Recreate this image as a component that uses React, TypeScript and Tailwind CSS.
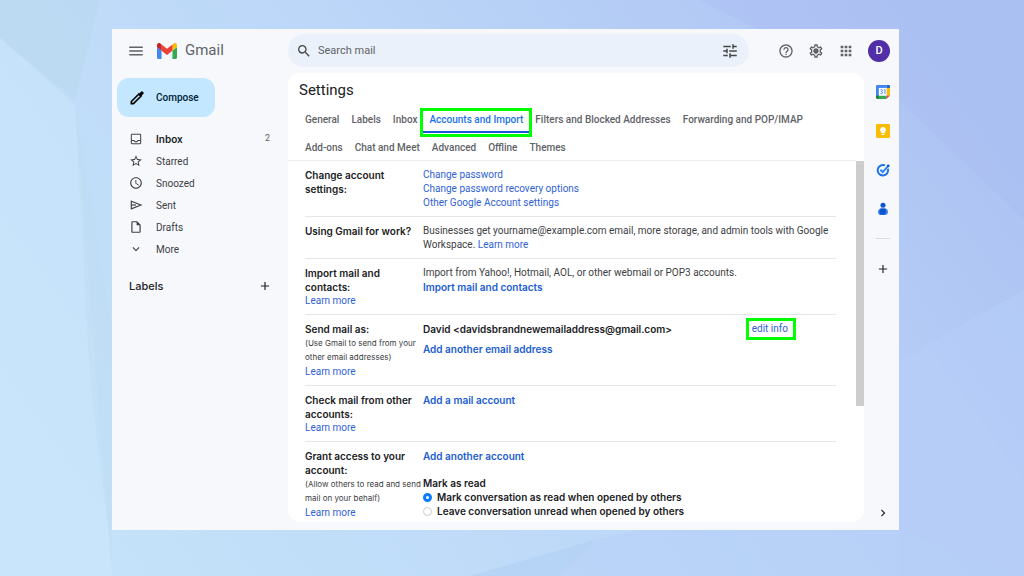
import * as React from 'react'
import {
  MdAccessTime,
  MdAdd,
  MdApps,
  MdChevronRight,
  MdExpandMore,
  MdHelpOutline,
  MdMenu,
  MdOutlineInsertDriveFile,
  MdOutlineSettings,
  MdSearch,
  MdStarBorder,
  MdTune,
} from 'react-icons/md'

function Backdrop() {
  return (
    <svg
      className="absolute inset-0 h-full w-full"
      viewBox="0 0 1024 576"
      preserveAspectRatio="none"
      aria-hidden="true"
    >
      <defs>
        <linearGradient id="sky" x1="0" y1="0.7" x2="1" y2="0.3">
          <stop offset="0" stopColor="#c4e2f9" />
          <stop offset="0.5" stopColor="#bcd7f8" />
          <stop offset="1" stopColor="#adc3f3" />
        </linearGradient>
      </defs>
      <rect width="1024" height="576" fill="url(#sky)" />
      <path d="M0 0h100L75 100 0 38Z" fill="#bad7ea" opacity="0.4" />
      <path d="M0 38 75 105 112 576H0Z" fill="#cbe8fd" opacity="0.5" />
      <path d="M75 105 112 330V560L90 380Z" fill="#bedbf1" opacity="0.5" />
      <path d="M700 0h324v220L899 100Z" fill="#a9bbf1" opacity="0.3" />
      <path d="M899 360 1024 290V576H899Z" fill="#b5cdf8" opacity="0.6" />
      <path d="M899 362 930 347 1024 480V576H940Z" fill="#b5cdf7" opacity="0.5" />
      <path d="M470 576 594 540 560 576Z" fill="#aecdf3" opacity="0.5" />
      <path d="M594 540 640 530H899L1024 576H560Z" fill="#b5cff8" opacity="0.5" />
    </svg>
  )
}

function GmailLogo() {
  return (
    <svg className="h-4 w-5" viewBox="52 42 88 66" preserveAspectRatio="none" aria-hidden="true">
      <path fill="#4285f4" d="M58 108h14V74L52 59v43c0 3.32 2.69 6 6 6" />
      <path fill="#34a853" d="M120 108h14c3.32 0 6-2.69 6-6V59l-20 15" />
      <path fill="#fbbc04" d="M120 48v26l20-15v-8c0-7.42-8.47-11.65-14.4-7.2" />
      <path fill="#ea4335" d="M72 74V48l24 18 24-18v26L96 92" />
      <path fill="#c5221f" d="M52 51v8l20 15V48l-5.6-4.2c-5.94-4.45-14.4-.22-14.4 7.2" />
    </svg>
  )
}

function PencilIcon() {
  return (
    <svg className="size-4" viewBox="0 0 24 24" fill="none" stroke="#000" strokeWidth="2.4" aria-hidden="true">
      <path d="M3.500 17.300 15 5.800l3.200 3.200L6.700 20.500H3.500Z" />
      <path d="m14 6.800 4.400-4.600c.6-.5 1.200-.5 1.700 0l1.700 1.700c.5.6.5 1.200 0 1.700L17.200 10Z" fill="#000" stroke="none" />
    </svg>
  )
}

function GearIcon() {
  return (
    <svg className="size-4" viewBox="0 0 24 24" fill="currentColor" aria-hidden="true">
      <MdOutlineSettings size={24} />
      <circle cx="12" cy="12" r="3.500" />
    </svg>
  )
}

function InboxIcon() {
  return (
    <svg className="size-3.5" viewBox="0 0 24 24" fill="none" stroke="#444746" strokeWidth="1.800" aria-hidden="true">
      <rect x="4" y="4" width="16" height="16" rx="1" />
      <path d="M4 14.500h4.500c.8 1.600 2 2.400 3.500 2.400s2.700-.8 3.500-2.400H20" />
    </svg>
  )
}

function SendIcon() {
  return (
    <svg className="size-3.5" viewBox="0 0 24 24" fill="none" stroke="currentColor" strokeWidth="2" aria-hidden="true">
      <path d="M4 5.500 20.500 12 4 18.500Z" />
      <path d="M4 12h8" />
    </svg>
  )
}

function CalendarIcon() {
  return (
    <svg className="size-3.5" viewBox="0 0 24 24" aria-hidden="true">
      <path fill="#4285f4" d="M2 0h16v5H5v14H0V2C0 1 1 0 2 0Z" />
      <path fill="#1967d2" d="M18 0h4c1 0 2 1 2 2v3h-6Z" />
      <path fill="#fbbc04" d="M18 5h6v13h-6Z" />
      <path fill="#34a853" d="M5 18h13v6H5Z" />
      <path fill="#188038" d="M0 18h5v6H2c-1 0-2-1-2-2Z" />
      <path fill="#ea4335" d="M18 18h6l-6 6Z" />
      <path fill="#fff" d="M5 5h13v13H5Z" />
      <path
        fill="none"
        stroke="#4285f4"
        strokeWidth="1.600"
        d="M7.500 8.500c1-1.300 3.500-1 3.500.8 0 1.200-1 1.900-2 1.900 1.200 0 2.300.8 2.300 2.100 0 2-3 2.500-4 .7M13.500 9l2-1v7.500"
      />
    </svg>
  )
}

function KeepIcon() {
  return (
    <svg className="size-3.5" viewBox="0 0 24 24" aria-hidden="true">
      <rect width="24" height="24" rx="2" fill="#fbbc04" />
      <path fill="#fff" d="M12 5a5 5 0 0 0-3 9v2h6v-2a5 5 0 0 0-3-9ZM9.500 17h5v2h-5Z" />
    </svg>
  )
}

function TasksIcon() {
  return (
    <svg className="size-3.5" viewBox="0 0 24 24" fill="none" aria-hidden="true">
      <path d="M15.500 4.200A9 9 0 1 0 20.500 10" stroke="#1a73e8" strokeWidth="3.400" />
      <path d="m7.500 11.500 4 4L21 5" stroke="#2684fc" strokeWidth="3.400" />
      <circle cx="21" cy="4.800" r="2.300" fill="#0b57d0" />
    </svg>
  )
}

function ContactsIcon() {
  return (
    <svg className="size-3.5" viewBox="0 0 24 24" aria-hidden="true">
      <circle cx="12" cy="5.500" r="4.300" fill="#0b57d0" />
      <path fill="#4285f4" d="M9 11h6c3.500 0 5.500 2.500 5.500 5.500 0 3-1.500 5.500-4 5.500h-9c-2.500 0-4-2.500-4-5.500C3.500 13.500 5.500 11 9 11Z" />
      <path fill="#0b57d0" d="M8 11h8c1.500 1.500 1.500 8-1 11H7.500C5 19 6 13 8 11Z" />
    </svg>
  )
}

function Highlight({ className }: { className: string }) {
  return <span className={`pointer-events-none absolute border-3 border-[#00ff00] ${className}`} />
}

const NAV = [
  { label: 'Inbox', icon: <InboxIcon />, count: 2 },
  { label: 'Starred', icon: <MdStarBorder className="size-3.5" /> },
  { label: 'Snoozed', icon: <MdAccessTime className="size-3.5" /> },
  { label: 'Sent', icon: <SendIcon /> },
  { label: 'Drafts', icon: <MdOutlineInsertDriveFile className="size-3.5" /> },
  { label: 'More', icon: <MdExpandMore className="size-3.5" /> },
]

function Sidebar() {
  return (
    <aside className="w-44 shrink-0 pt-[5px] pl-[5px]">
      <button className="flex h-[39px] w-[98px] items-center gap-[11px] rounded-xl bg-[#c2e7ff] pl-3 text-[10px] font-medium text-[#001d35]">
        <PencilIcon />
        Compose
      </button>
      <nav className="mt-[11px] pr-[18px] pl-3 text-[10px] text-[#3c4043]">
        {NAV.map((item) => (
          <a key={item.label} href="#" className="flex h-[22px] items-center gap-[13px]">
            {item.icon}
            <span
              className={
                item.count ? "flex-1 font-['Inter',sans-serif] font-semibold text-[#202124]" : 'flex-1'
              }
            >
              {item.label}
            </span>
            {item.count && <span className="text-[9px] text-[#5f6368]">{item.count}</span>}
          </a>
        ))}
      </nav>
      <div className="mt-4 flex items-center justify-between pr-4 pl-3 text-[#202124]">
        <h2 className="font-['Inter',sans-serif] text-[11px] leading-5 font-medium">Labels</h2>
        <button aria-label="Create new label">
          <MdAdd className="size-3.5" />
        </button>
      </div>
    </aside>
  )
}

function Header() {
  return (
    <header className="flex h-11 items-center pb-px text-[#5f6368]">
      <div className="flex w-44 shrink-0 items-center pl-[15px]">
        <button aria-label="Main menu">
          <MdMenu className="size-[18px]" />
        </button>
        <div className="flex items-center gap-2 pl-3">
          <GmailLogo />
          <span className="text-[15px]">Gmail</span>
        </div>
      </div>
      <form className="flex h-[33px] flex-1 items-center gap-1.5 rounded-full bg-[#eaf1fb] pr-2.5 pl-2 text-[#444746]">
        <button type="button" aria-label="Search">
          <MdSearch className="size-4" />
        </button>
        <input
          type="search"
          aria-label="Search mail"
          placeholder="Search mail"
          className="min-w-0 flex-1 bg-transparent pt-0.5 text-[11px] outline-none placeholder:text-[#5f6368]"
        />
        <button type="button" aria-label="Search options">
          <MdTune className="size-[18px]" />
        </button>
      </form>
      <div className="flex w-[150px] shrink-0 items-center justify-end gap-3.5 pr-[9px]">
        <button aria-label="Support">
          <MdHelpOutline className="size-4" />
        </button>
        <button aria-label="Settings">
          <GearIcon />
        </button>
        <button aria-label="Google apps">
          <MdApps className="size-4" />
        </button>
        <button className="size-[22px] rounded-full bg-[#512da8] pt-0.5 text-[11px] font-medium text-white">D</button>
      </div>
    </header>
  )
}

const TAB_ROWS = [
  ['General', 'Labels', 'Inbox', 'Accounts and Import', 'Filters and Blocked Addresses', 'Forwarding and POP/IMAP'],
  ['Add-ons', 'Chat and Meet', 'Advanced', 'Offline', 'Themes'],
]

function Tabs() {
  return (
    <nav className="mr-2 border-b border-[#eceff1] pl-[17px] text-[10px] font-medium text-[#5f6368]">
      {TAB_ROWS.map((row, i) => (
        <div key={i} className="flex h-7 items-center gap-3 pt-0.5 whitespace-nowrap">
          {row.map((tab) =>
            tab === 'Accounts and Import' ? (
              <a key={tab} href="#" className="relative text-[#1a73e8]">
                {tab}
                <span className="absolute -inset-x-1.5 -bottom-1.5 h-0.5 bg-[#1a56db]" />
                <Highlight className="-inset-x-[9px] -top-1 -bottom-2.5" />
              </a>
            ) : (
              <a key={tab} href="#">
                {tab}
              </a>
            )
          )}
        </div>
      ))}
    </nav>
  )
}

const STRONG = "font-['Inter',sans-serif] font-semibold"

function Link({ children, bold }: { children: React.ReactNode; bold?: boolean }) {
  return (
    <a href="#" className={bold ? `${STRONG} text-[#1a5dd0]` : 'text-[#2f62d5]'}>
      {children}
    </a>
  )
}

function Row({
  title,
  note,
  learnMore,
  children,
}: {
  title: string
  note?: string
  learnMore?: boolean
  children: React.ReactNode
}) {
  return (
    <section className="flex border-b border-[#e4e6e8] pt-[7px] pb-1.5 last:border-b-0 last:pb-0.5">
      <div className="w-[118px] shrink-0">
        <h3 className={`${STRONG} pr-2 text-[#202124]`}>{title}</h3>
        {note && <p className="pb-px font-['Inter',sans-serif] text-[8px] leading-[14px]">{note}</p>}
        {learnMore && <Link>Learn more</Link>}
      </div>
      <div className="min-w-0 flex-1">{children}</div>
    </section>
  )
}

function Settings() {
  const [markRead, setMarkRead] = React.useState(true)
  const radio =
    'size-[9px] appearance-none rounded-full border border-[#c8cacc] bg-white checked:border-3 checked:border-[#0b7bff]'

  return (
    <main className="flex min-w-0 flex-1 flex-col overflow-hidden rounded-xl bg-white">
      <h1 className="pt-[7px] pb-1 pl-[11px] text-[15px] leading-5 text-[#202124]">Settings</h1>
      <Tabs />
      <div className="flex flex-1">
        <div className="min-w-0 flex-1 pr-5 pl-[17px] text-[10px] leading-[14px] text-[#3c4043]">
          <Row title="Change account settings:">
            <div className="flex flex-col items-start">
              <Link>Change password</Link>
              <Link>Change password recovery options</Link>
              <Link>Other Google Account settings</Link>
            </div>
          </Row>
          <Row title="Using Gmail for work?">
            Businesses get yourname@example.com email, more storage, and admin tools with Google Workspace.{' '}
            <Link>Learn more</Link>
          </Row>
          <Row title="Import mail and contacts:" learnMore>
            <p>Import from Yahoo!, Hotmail, AOL, or other webmail or POP3 accounts.</p>
            <Link bold>Import mail and contacts</Link>
          </Row>
          <Row title="Send mail as:" note="(Use Gmail to send from your other email addresses)" learnMore>
            <div className="flex justify-between pr-12">
              <span className={`${STRONG} text-[#202124]`}>David &lt;davidsbrandnewemailaddress@gmail.com&gt;</span>
              <a href="#" className="relative text-[#2f62d5]">
                edit info
                <Highlight className="-inset-y-1 -right-2 -left-1.5" />
              </a>
            </div>
            <div className="mt-1.5">
              <Link bold>Add another email address</Link>
            </div>
          </Row>
          <Row title="Check mail from other accounts:" learnMore>
            <Link bold>Add a mail account</Link>
          </Row>
          <Row title="Grant access to your account:" note="(Allow others to read and send mail on your behalf)" learnMore>
            <Link bold>Add another account</Link>
            <fieldset className={`${STRONG} mt-3 text-[#202124]`}>
              <legend>Mark as read</legend>
              <label className="flex items-center gap-[5px]">
                <input
                  type="radio"
                  name="mark"
                  className={radio}
                  checked={markRead}
                  onChange={() => setMarkRead(true)}
                />
                Mark conversation as read when opened by others
              </label>
              <label className="flex items-center gap-[5px]">
                <input
                  type="radio"
                  name="mark"
                  className={radio}
                  checked={!markRead}
                  onChange={() => setMarkRead(false)}
                />
                Leave conversation unread when opened by others
              </label>
            </fieldset>
          </Row>
        </div>
        <div className="w-2 shrink-0">
          <div className="h-[68%] bg-[#cdcdcd]" />
        </div>
      </div>
    </main>
  )
}

function SidePanel() {
  return (
    <aside className="flex w-[35px] shrink-0 flex-col items-center pt-3 pb-0.5 pl-[3px] text-[#202124]">
      <div className="flex flex-col items-center gap-[25px]">
        <button aria-label="Calendar">
          <CalendarIcon />
        </button>
        <button aria-label="Keep">
          <KeepIcon />
        </button>
        <button aria-label="Tasks">
          <TasksIcon />
        </button>
        <button aria-label="Contacts">
          <ContactsIcon />
        </button>
      </div>
      <hr className="mt-[22px] mb-[23px] w-3.5 border-[#dadce0]" />
      <button aria-label="Get add-ons">
        <MdAdd className="size-3.5" />
      </button>
      <button aria-label="Hide side panel" className="mt-auto">
        <MdChevronRight className="size-3.5" />
      </button>
    </aside>
  )
}

export default function App() {
  return (
    <div className="relative flex min-h-screen flex-col pt-[29px] pr-[125px] pb-[46px] pl-28 font-['Roboto',sans-serif]">
      <Backdrop />
      <div className="relative flex flex-1 flex-col bg-[#f6f8fc] pb-2">
        <Header />
        <div className="flex flex-1">
          <Sidebar />
          <Settings />
          <SidePanel />
        </div>
      </div>
    </div>
  )
}
